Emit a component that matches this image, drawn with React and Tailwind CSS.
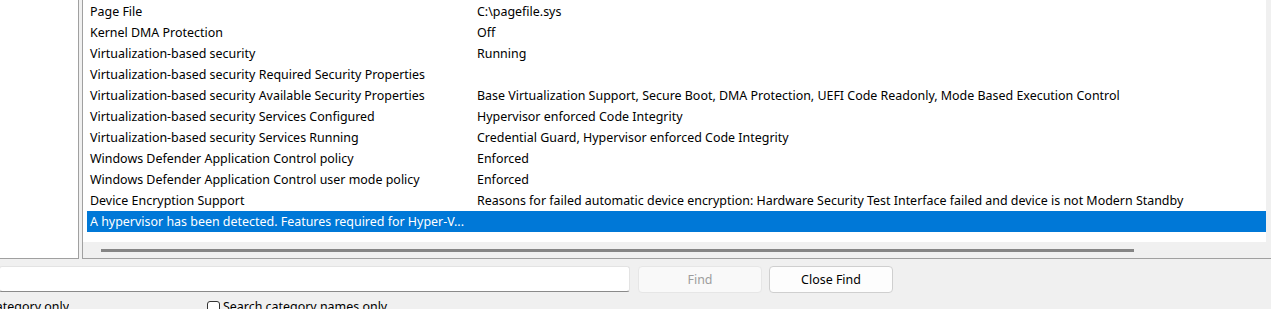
const ROWS = [
  ['Page File', 'C:\\pagefile.sys'],
  ['Kernel DMA Protection', 'Off'],
  ['Virtualization-based security', 'Running'],
  ['Virtualization-based security Required Security Properties', ''],
  [
    'Virtualization-based security Available Security Properties',
    'Base Virtualization Support, Secure Boot, DMA Protection, UEFI Code Readonly, Mode Based Execution Control',
  ],
  ['Virtualization-based security Services Configured', 'Hypervisor enforced Code Integrity'],
  ['Virtualization-based security Services Running', 'Credential Guard, Hypervisor enforced Code Integrity'],
  ['Windows Defender Application Control policy', 'Enforced'],
  ['Windows Defender Application Control user mode policy', 'Enforced'],
  [
    'Device Encryption Support',
    'Reasons for failed automatic device encryption: Hardware Security Test Interface failed and device is not Modern Standby',
  ],
]

function Row({ item, value }) {
  return (
    <div className="flex h-[21px] items-center whitespace-nowrap pl-[3px] pt-[2px]">
      <span className="w-[387px] shrink-0">{item}</span>
      <span>{value}</span>
    </div>
  )
}

export default function App() {
  return (
    <div
      className="w-[1271px] h-[309px] overflow-hidden bg-[#f0f0f0] text-[12.45px] text-black"
      style={{ fontFamily: '"Noto Sans", "Open Sans", sans-serif' }}
    >
      {/* panels */}
      <div className="flex h-[259px]">
        <div className="w-[79px] shrink-0 bg-white border-r border-b border-[#a0a0a0]" />
        <div className="w-[3px] shrink-0" />
        <div className="flex-1 flex flex-col border-l border-b border-[#a0a0a0]">
          <div className="flex flex-1 min-h-0">
            <div className="w-[1183px] shrink-0 bg-white pl-[4px] pt-[1px]">
              {ROWS.map(([a, b]) => (
                <Row key={a} item={a} value={b} />
              ))}
              <div className="flex h-[21px] items-center whitespace-nowrap pl-[3px] pt-[2px] bg-[#0078d7] text-white">
                A hypervisor has been detected. Features required for Hyper-V...
              </div>
            </div>
            <div className="flex-1" />
          </div>
          <div className="h-[16px] shrink-0 flex items-center pl-[18px]">
            <div className="w-[1033px] h-[3px] bg-[#858585]" />
          </div>
        </div>
      </div>

      {/* find bar */}
      <div className="flex items-start pt-[7px] gap-[8px]">
        <div className="w-[631px] h-[26px] -ml-[1px] bg-white border border-[#e3e3e3] border-b-[#8a8a8a] rounded-[3px]" />
        <button className="w-[124px] h-[27px] pt-[2px] rounded-[4px] border border-[#e6e6e6] bg-[#f9f9f9] text-[#9d9d9d]">
          Find
        </button>
        <button className="-ml-[1px] w-[124px] h-[27px] pt-[2px] rounded-[4px] border border-[#cfcfcf] bg-[#fdfdfd] text-black">
          Close Find
        </button>
      </div>

      {/* options */}
      <div className="flex items-center mt-[5px] whitespace-nowrap">
        <div className="w-[69px] overflow-hidden flex justify-end">
          <span>Search selected category only</span>
        </div>
        <div className="ml-[138px] w-[13px] h-[13px] border border-[#333] rounded-[3px] bg-white" />
        <span className="ml-[3px]">Search category names only</span>
      </div>
    </div>
  )
}
